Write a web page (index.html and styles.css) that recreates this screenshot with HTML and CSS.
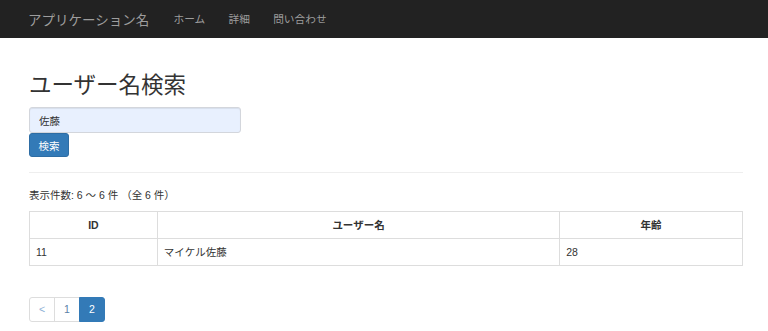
FILE: index.html
```html
<!DOCTYPE html>
<html lang="ja">
<head>
<meta charset="utf-8">
<title>ユーザー名検索</title>
<link rel="stylesheet" href="styles.css">
</head>
<body>
<nav class="navbar">
  <a class="brand" href="#">アプリケーション名</a>
  <ul class="nav">
    <li><a href="#">ホーム</a></li>
    <li><a href="#">詳細</a></li>
    <li><a href="#">問い合わせ</a></li>
  </ul>
</nav>
<main class="container">
  <h2 class="title">ユーザー名検索</h2>
  <form class="search">
    <input class="input" type="text" value="佐藤">
    <button class="btn" type="button">検索</button>
  </form>
  <hr class="rule">
  <p class="count">表示件数: 6 ～ 6 件 （全 6 件）</p>
  <table class="table">
    <thead>
      <tr><th class="c-id">ID</th><th class="c-name">ユーザー名</th><th class="c-age">年齢</th></tr>
    </thead>
    <tbody>
      <tr><td>11</td><td>マイケル佐藤</td><td>28</td></tr>
    </tbody>
  </table>
  <ul class="pagination">
    <li class="prev"><a href="#">&lt;</a></li>
    <li><a href="#">1</a></li>
    <li class="active"><a href="#">2</a></li>
  </ul>
</main>
</body>
</html>
```
FILE: styles.css
```css
* { box-sizing: border-box; }
body {
  margin: 0;
  font-family: "Liberation Sans", "Noto Sans CJK JP", sans-serif;
  font-size: 10.5px;
  line-height: 15px;
  color: #333;
  background: #fff;
}
a { text-decoration: none; }
.navbar {
  height: 38px;
  background: #222;
  display: flex;
  align-items: center;
  padding-left: 28px;
}
.brand {
  font-family: "Noto Sans CJK JP", sans-serif;
  font-size: 13.5px;
  color: #9d9d9d;
  padding-right: 13px;
  line-height: 38px;
}
.nav {
  display: flex;
  list-style: none;
  margin: 0;
  padding: 0;
}
.nav a {
  display: block;
  font-family: "Noto Sans CJK JP", sans-serif;
  font-size: 10.7px;
  color: #9d9d9d;
  padding: 0 12px 0 11.25px;
  line-height: 38px;
}
.container {
  padding: 0 25px 0 29px;
}
.title {
  font-family: "Noto Sans CJK JP", sans-serif;
  font-size: 22.5px;
  font-weight: 400;
  line-height: 25px;
  margin: 33px 0 11px;
  color: #333;
}
.search {
  display: flex;
  flex-direction: column;
  align-items: flex-start;
  margin: 0;
}
.input {
  width: 212px;
  height: 26px;
  border: 1px solid #d3d6dc;
  border-radius: 3px;
  background: #e8f0fe;
  padding: 0 9px;
  font-family: "Liberation Sans", "Noto Sans CJK JP", sans-serif;
  font-size: 10.5px;
  color: #333;
  box-shadow: inset 0 1px 1px rgba(0,0,0,.075);
}
.btn {
  height: 24px;
  padding: 0 8.5px;
  border: 1px solid #2e6da4;
  border-radius: 3px;
  background: #337ab7;
  color: #fff;
  font-family: "Noto Sans CJK JP", sans-serif;
  font-size: 10.5px;
  margin-top: 0;
}
.rule {
  border: 0;
  border-top: 1px solid #eee;
  margin: 15px 0 15px;
}
.count {
  margin: 0 0 8px;
  line-height: 15px;
}
.table {
  width: 714px;
  border-collapse: collapse;
  margin-bottom: 31px;
}
.table th, .table td {
  border: 1px solid #ddd;
  padding: 6px;
  line-height: 14px;
  text-align: left;
  font-size: 10.5px;
}
.table th {
  text-align: center;
  font-weight: 700;
}
.c-id { width: 128px; }
.c-name { width: 403px; }
.c-age { width: 183px; }
.pagination {
  display: flex;
  list-style: none;
  margin: 0;
  padding: 0;
}
.pagination a {
  display: block;
  width: 26px;
  height: 25px;
  line-height: 23px;
  text-align: center;
  border: 1px solid #ddd;
  margin-left: -1px;
  color: #5a7fa8;
  background: #fff;
  font-size: 10.5px;
}
.pagination .prev a {
  color: #8fb1d6;
}
.pagination li:first-child a {
  margin-left: 0;
  border-radius: 3px 0 0 3px;
}
.pagination li:last-child a {
  border-radius: 0 3px 3px 0;
}
.pagination .active a {
  background: #337ab7;
  border-color: #337ab7;
  color: #fff;
  position: relative;
  z-index: 1;
}
```
